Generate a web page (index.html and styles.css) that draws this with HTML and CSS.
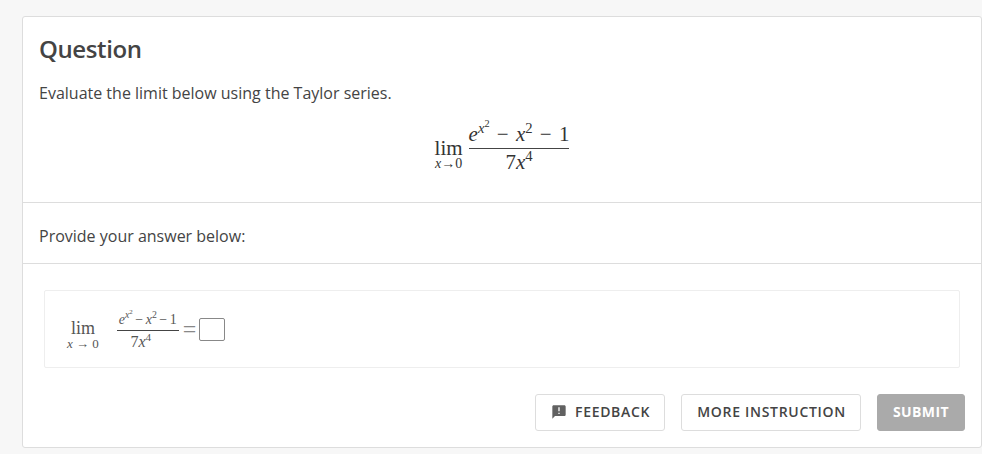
FILE: index.html
```html
<!DOCTYPE html>
<html lang="en">

<head>
    <meta charset="UTF-8">
    <meta name="viewport" content="width=device-width, initial-scale=1.0">
    <title>Question</title>
    <link rel="stylesheet" href="styles.css">
</head>

<body>
    <div class="card">
        <div class="question">
            <h1>Question</h1>
            <p>Evaluate the limit below using the Taylor series.</p>
            <div class="math">
                <div class="lim">
                    <span>lim</span>
                    <small><i>x</i>→0</small>
                </div>
                <div class="frac">
                    <div class="top"><i>e</i><sup><i>x</i><sup>2</sup></sup> <b>−</b> <i>x</i><sup>2</sup> <b>−</b> 1</div>
                    <div class="bottom">7<i>x</i><sup>4</sup></div>
                </div>
            </div>
        </div>

        <div class="prompt">Provide your answer below:</div>

        <div class="answer-wrap">
            <div class="answer">
                <div class="lim lim-small">
                    <span>lim</span>
                    <small><i>x</i> → 0</small>
                </div>
                <div class="frac frac-small">
                    <div class="top"><i>e</i><sup><i>x</i><sup>2</sup></sup> <b>−</b> <i>x</i><sup>2</sup> <b>−</b> 1</div>
                    <div class="bottom">7<i>x</i><sup>4</sup></div>
                </div>
                <span class="equals">=</span>
                <span class="box"></span>
            </div>
        </div>

        <div class="buttons">
            <button class="btn">
                <svg width="16" height="16" viewBox="0 0 24 24"><path fill="#616161" d="M20 2H4c-1.100 0-2 .9-2 2v18l4-4h14c1.100 0 2-.9 2-2V4c0-1.100-.9-2-2-2zm-7 9h-2V5h2v6zm0 4h-2v-2h2v2z"/></svg>
                FEEDBACK
            </button>
            <button class="btn">MORE INSTRUCTION</button>
            <button class="btn submit">SUBMIT</button>
        </div>
    </div>
</body>

</html>
```

FILE: styles.css
```css
body {
    font-family: "Open Sans", sans-serif;
    background-color: #f7f7f7;
    color: #444;
    margin: 0;
    padding: 16px 0 6px 22px;
}

.card {
    background-color: #fff;
    border: 1px solid #ddd;
    border-radius: 3px;
    box-sizing: border-box;
    height: 432px;
}

.question {
    padding: 0 16px;
    height: 185px;
    border-bottom: 1px solid #ddd;
}

h1 {
    font-size: 24px;
    font-weight: 600;
    line-height: 32px;
    letter-spacing: -0.4px;
    margin: 0;
    padding-top: 16px;
}

.question p {
    font-size: 16px;
    line-height: 24px;
    margin: 16px 0 0;
}

.math {
    display: flex;
    justify-content: center;
    align-items: center;
    gap: 6px;
    margin-top: 15px;
    font-family: "Liberation Serif", serif;
    font-size: 21px;
    color: #333;
}

.lim {
    display: flex;
    flex-direction: column;
    align-items: center;
    line-height: 18px;
    padding-top: 13px;
}

.lim small {
    font-size: 14px;
    line-height: 13px;
}

.frac {
    display: flex;
    flex-direction: column;
    align-items: center;
}

.frac .top {
    border-bottom: 1px solid #444;
    line-height: 28px;
    word-spacing: 2px;
}

.frac .bottom {
    line-height: 26px;
}

.frac b {
    font-weight: normal;
}

sup {
    font-size: 70%;
    line-height: 0;
}

.prompt {
    font-size: 16px;
    line-height: 24px;
    padding: 21px 16px 15px;
    border-bottom: 1px solid #ddd;
}

.answer-wrap {
    padding: 26px 21px 0;
}

.answer {
    display: flex;
    align-items: center;
    height: 78px;
    box-sizing: border-box;
    border: 1px solid #eee;
    border-radius: 2px;
    padding-left: 22px;
    font-family: "Liberation Serif", serif;
    font-size: 18px;
    color: #555;
}

.lim-small {
    padding-top: 12px;
    line-height: 18px;
}

.lim-small small {
    font-size: 13px;
    line-height: 14px;
}

.frac-small {
    margin: 5px 0 0 18px;
}

.frac-small .top {
    font-size: 14px;
    line-height: 17px;
    padding: 0 2px 2px;
    word-spacing: -1px;
}

.frac-small .bottom {
    font-size: 16px;
    line-height: 22px;
    margin-right: 14px;
}

.equals {
    margin: 0 3px 0 4px;
    font-size: 24px;
    color: #888;
}

.box {
    width: 24px;
    height: 21px;
    border: 1px solid #888;
    border-radius: 2px;
}

.buttons {
    display: flex;
    justify-content: flex-end;
    gap: 16px;
    padding: 26px 16px 0;
}

.btn {
    display: flex;
    align-items: center;
    gap: 8px;
    font-family: "Open Sans", sans-serif;
    font-size: 14px;
    font-weight: 600;
    letter-spacing: 0.7px;
    height: 37px;
    padding: 0 14px 2px 15px;
    background-color: #fff;
    color: #444;
    border: 1px solid #ddd;
    border-radius: 3px;
}

.submit {
    background-color: #aaa;
    border-color: #aaa;
    color: #fff;
    font-weight: 700;
    letter-spacing: 0.4px;
    padding: 0 15px 2px 15px;
}
```
